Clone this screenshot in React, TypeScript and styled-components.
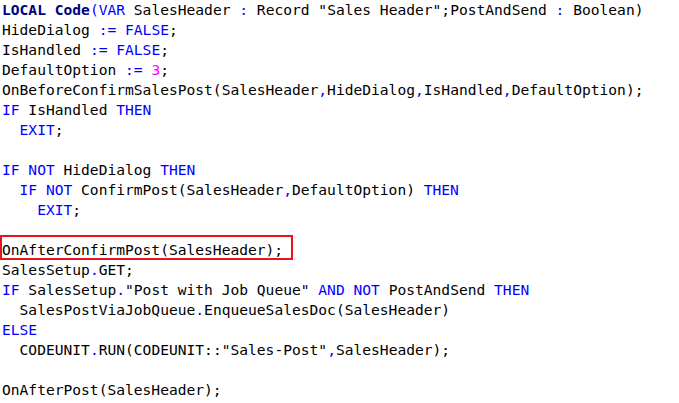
import styled, { createGlobalStyle } from "styled-components";

type Kind = "t" | "k" | "n" | "h";
type Token = [string, Kind?];

const GlobalStyle = createGlobalStyle`
  html, body {
    margin: 0;
    padding: 0;
    background: #ffffff;
  }
`;

const Editor = styled.pre`
  margin: 0;
  padding: 0 0 0 2px;
  width: 679px;
  height: 403px;
  box-sizing: border-box;
  overflow: hidden;
  background: #ffffff;
  font-family: "DejaVu Sans Mono", "Liberation Mono", monospace;
  font-size: 14.6px;
  line-height: 20px;
  color: #000000;
`;

const Line = styled.div<{ $boxed?: boolean }>`
  position: relative;
  height: 20px;
  white-space: pre;

  ${({ $boxed }) =>
    $boxed &&
    `
    &::before {
      content: "";
      position: absolute;
      left: -2px;
      top: -5px;
      width: 293px;
      height: 25px;
      box-sizing: border-box;
      border: 2px solid #e8141b;
      pointer-events: none;
    }
  `}
`;

const Word = styled.span<{ $kind: Kind }>`
  color: ${({ $kind }) =>
    $kind === "k" ? "#0000ff" : $kind === "n" ? "#ff00ff" : $kind === "h" ? "#000080" : "#000000"};
  font-weight: ${({ $kind }) => ($kind === "h" ? 700 : 400)};
`;

const code: Token[][] = [
  [["LOCAL Code", "h"], ["(VAR", "k"], [" SalesHeader "], [":", "k"], [' Record "Sales Header";PostAndSend '], [":", "k"], [" Boolean)"]],
  [["HideDialog "], [":=", "k"], [" "], ["FALSE", "k"], [";"]],
  [["IsHandled "], [":=", "k"], [" "], ["FALSE", "k"], [";"]],
  [["DefaultOption "], [":=", "k"], [" "], ["3", "n"], [";"]],
  [["OnBeforeConfirmSalesPost(SalesHeader"], [",", "k"], ["HideDialog"], [",", "k"], ["IsHandled"], [",", "k"], ["DefaultOption);"]],
  [["IF", "k"], [" IsHandled "], ["THEN", "k"]],
  [["  "], ["EXIT", "k"], [";"]],
  [],
  [["IF NOT", "k"], [" HideDialog "], ["THEN", "k"]],
  [["  "], ["IF NOT", "k"], [" ConfirmPost(SalesHeader"], [",", "k"], ["DefaultOption) "], ["THEN", "k"]],
  [["    "], ["EXIT", "k"], [";"]],
  [],
  [["OnAfterConfirmPost(SalesHeader);"]],
  [["SalesSetup"], [".", "k"], ["GET;"]],
  [["IF", "k"], [" SalesSetup"], [".", "k"], ['"Post with Job Queue" '], ["AND NOT", "k"], [" PostAndSend "], ["THEN", "k"]],
  [["  SalesPostViaJobQueue"], [".", "k"], ["EnqueueSalesDoc(SalesHeader)"]],
  [["ELSE", "k"]],
  [["  CODEUNIT"], [".", "k"], ['RUN(CODEUNIT::"Sales-Post"'], [",", "k"], ["SalesHeader);"]],
  [],
  [["OnAfterPost(SalesHeader);"]],
];

export default function App() {
  return (
    <>
      <GlobalStyle />
      <Editor>
        {code.map((tokens, i) => (
          <Line key={i} $boxed={i === 12}>
            {tokens.map(([text, kind], j) => (
              <Word key={j} $kind={kind ?? "t"}>
                {text}
              </Word>
            ))}
          </Line>
        ))}
      </Editor>
    </>
  );
}
